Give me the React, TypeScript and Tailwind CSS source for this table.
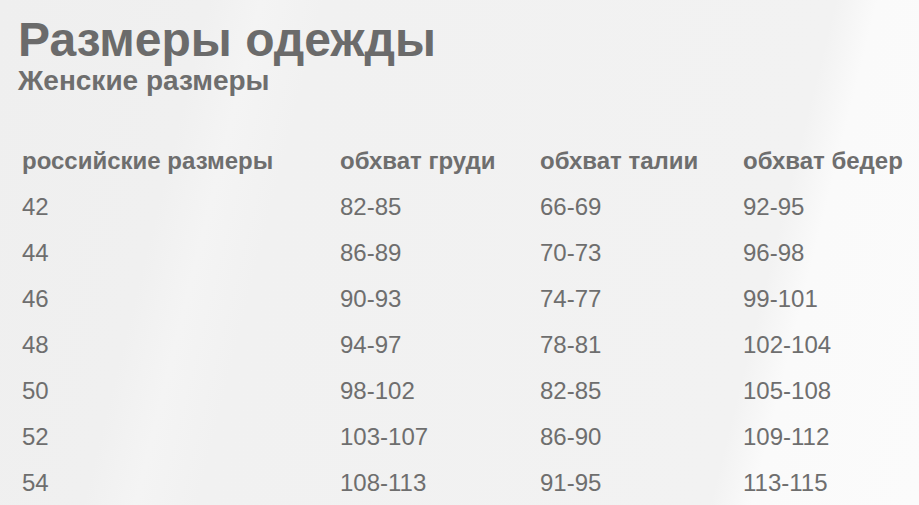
const rows = [
  ["42", "82-85", "66-69", "92-95"],
  ["44", "86-89", "70-73", "96-98"],
  ["46", "90-93", "74-77", "99-101"],
  ["48", "94-97", "78-81", "102-104"],
  ["50", "98-102", "82-85", "105-108"],
  ["52", "103-107", "86-90", "109-112"],
  ["54", "108-113", "91-95", "113-115"],
];

const headers = ["российские размеры", "обхват груди", "обхват талии", "обхват бедер"];

export default function App() {
  return (
    <div className="relative h-[505px] w-[919px] overflow-hidden bg-[linear-gradient(104deg,#efefef_0%,#f0f0f0_20%,#f4f4f4_25%,#f1f1f1_31%,#f2f2f2_80%,#f6f6f6_82%,#fafafa_84%,#fbfbfb_100%)] font-['Liberation_Sans',Arial,sans-serif] text-[#6e6e6e]">
      <div className="px-[18px] pt-[14px]">
        <h1 className="text-[48px] font-bold leading-[52px] text-[#6b6b6b]">Размеры одежды</h1>
        <h2 className="text-[28px] font-bold leading-[30px]">Женские размеры</h2>
      </div>

      <div className="mt-[42px] pl-[22px]">
        <div className="grid grid-cols-[318px_200px_203px_1fr] text-[24px] font-bold leading-[46px]">
          {headers.map((h) => (
            <div key={h}>{h}</div>
          ))}
        </div>
        {rows.map((r) => (
          <div key={r[0]} className="grid grid-cols-[318px_200px_203px_1fr] text-[24px] leading-[46px]">
            {r.map((c, i) => (
              <div key={i}>{c}</div>
            ))}
          </div>
        ))}
      </div>
    </div>
  );
}
